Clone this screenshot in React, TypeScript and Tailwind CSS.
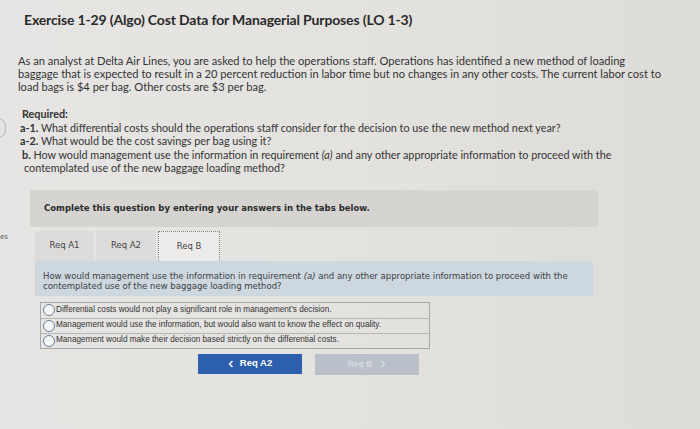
import React from 'react';

const proxima = { fontFamily: 'Lato, "Open Sans", Arial, sans-serif' };

const options = [
  'Differential costs would not play a significant role in management\u2019s decision.',
  'Management would use the information, but would also want to know the effect on quality.',
  'Management would make their decision based strictly on the differential costs.',
];

export default function App() {
  return (
    <div className="w-[700px] h-[429px] overflow-hidden bg-gradient-to-r from-[#e6e5e3] via-[#e3e2df] to-[#dedcd8] text-[#2b2b2b] flex">
      {/* cut-off left margin */}
      <div className="w-[14px] shrink-0 flex flex-col" style={proxima}>
        <div className="mt-[118px] -ml-[10px] w-[16px] h-[20px] rounded-full border border-[#b8b8b8]" />
        <div className="mt-[94px] ml-0 text-[7px] text-[#555] font-['DejaVu_Sans',sans-serif]">es</div>
      </div>

      <div className="flex-1 flex flex-col">
        <h1 className="mt-[12px] ml-[10px] text-[14px] font-bold leading-[16px] tracking-[-0.15px] text-[#2a2a2a] whitespace-nowrap" style={proxima}>
          Exercise 1-29 (Algo) Cost Data for Managerial Purposes (LO 1-3)
        </h1>

        <p className="mt-[26px] ml-[4px] text-[11.1px] leading-[13px] whitespace-nowrap text-[#333]" style={proxima}>
          As an analyst at Delta Air Lines, you are asked to help the operations staff. Operations has identified a new method of loading
          <br />
          baggage that is expected to result in a 20 percent reduction in labor time but no changes in any other costs. The current labor cost to
          <br />
          load bags is $4 per bag. Other costs are $3 per bag.
        </p>

        <div className="mt-[14px] ml-[8px] text-[10.8px] leading-[13.5px] whitespace-nowrap text-[#333]" style={proxima}>
          <div className="font-bold">Required:</div>
          <div className="-ml-[2px]">
            <span className="font-bold">a-1.</span> What differential costs should the operations staff consider for the decision to use the new method next year?
          </div>
          <div className="-ml-[2px]">
            <span className="font-bold">a-2.</span> What would be the cost savings per bag using it?
          </div>
          <div>
            <span className="font-bold">b.</span> How would management use the information in requirement <i>(a)</i> and any other appropriate information to proceed with the
          </div>
          <div className="ml-[2px]">contemplated use of the new baggage loading method?</div>
        </div>

        <div className="mt-[15px] ml-[16px] w-[568px] h-[37px] bg-[#d5d4d1] flex items-center pl-[14px]">
          <span className="text-[8.5px] font-bold text-[#2a2a2a] font-['DejaVu_Sans',Verdana,sans-serif]">
            Complete this question by entering your answers in the tabs below.
          </span>
        </div>

        <div className="mt-[4px] ml-[21px] w-[558px] flex flex-col font-['DejaVu_Sans',Verdana,sans-serif]">
          <div className="flex gap-[2px] h-[30px]">
            <div className="w-[59px] bg-[#dcdbd9] flex items-center justify-center text-[8.5px] text-[#444]">Req A1</div>
            <div className="w-[60px] bg-[#dcdbd9] flex items-center justify-center text-[8.5px] text-[#444]">Req A2</div>
            <div className="w-[62px] bg-[#ecebea] border border-dotted border-[#888] border-b-0 flex items-center justify-center text-[8.5px] text-[#444]">Req B</div>
          </div>
          <div className="h-[35px] bg-[#cdd7df] pl-[8px] pt-[10px] text-[8.5px] leading-[10.5px] text-[#3a3f44] whitespace-nowrap">
            How would management use the information in requirement <i>(a)</i> and any other appropriate information to proceed with the
            <br />
            contemplated use of the new baggage loading method?
          </div>
        </div>

        <div className="mt-[6px] ml-[26px] w-[390px] border border-[#a8a8a8] font-['Liberation_Sans',Arial,sans-serif]">
          {options.map((o, i) => (
            <div key={o} className={`h-[15px] flex items-center gap-[1px] pl-[2px] text-[8.2px] text-[#333] whitespace-nowrap ${i > 0 ? 'border-t border-[#b5b5b5]' : ''}`}>
              <span className="w-[12px] h-[12px] rounded-full border border-[#6a7f99] bg-[#f4f4f4] shrink-0" />
              {o}
            </div>
          ))}
        </div>

        <div className="mt-[5px] ml-[184px] flex gap-[13px] font-['Liberation_Sans',Arial,sans-serif]">
          <div className="w-[104px] h-[20px] bg-[#2c60ac] flex items-center justify-center gap-[6px] text-white text-[9.5px] font-bold">
            <svg width="6" height="8" viewBox="0 0 6 8"><path d="M4.5 1 L1.5 4 L4.5 7" fill="none" stroke="white" strokeWidth="1.4" /></svg>
            Req A2
          </div>
          <div className="w-[104px] h-[21px] bg-[#b9c0ca] flex items-center justify-center gap-[8px] text-[#d6dbe2] text-[8.5px] font-bold">
            Req B
            <svg width="6" height="8" viewBox="0 0 6 8"><path d="M1.5 1 L4.5 4 L1.5 7" fill="none" stroke="#d6dbe2" strokeWidth="1.2" /></svg>
          </div>
        </div>
      </div>
    </div>
  );
}
